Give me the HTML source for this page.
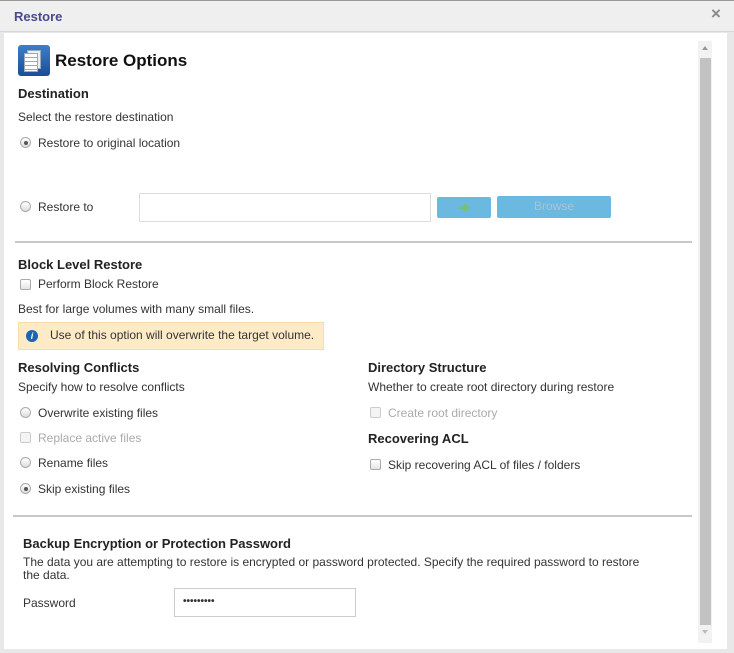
<!DOCTYPE html>
<html><head><style>
*{margin:0;padding:0;box-sizing:border-box}
body{width:734px;height:653px;background:#e8e8e8;font-family:"Liberation Sans",Arial,sans-serif;font-size:12px;color:#333;position:relative;overflow:hidden}
.a{position:absolute;white-space:nowrap}
.h{font-weight:bold;font-size:13px;color:#222}
.rad{position:absolute;width:11px;height:11px;border:1px solid #aaa;border-radius:50%;background:linear-gradient(#fff,#ddd)}
.rad.on::after{content:"";position:absolute;left:2.5px;top:2.5px;width:4px;height:4px;border-radius:50%;background:#555}
.cb{position:absolute;width:11px;height:11px;border:1px solid #aaa;border-radius:2px;background:linear-gradient(#fff,#e4e4e4)}
.cb.dis{border-color:#ccc;background:#f4f4f4}
.hr{position:absolute;height:2px;background:#c8c8c8}
</style></head><body>
<div class="a" style="left:0;top:0;width:734px;height:1px;background:#999"></div>
<div class="a" style="left:0;top:1px;width:734px;height:31px;background:#efefef;border-bottom:1px solid #d8d8d8"></div>
<div class="a" style="left:14px;top:9px;font-size:13px;font-weight:bold;color:#4a4a8a">Restore</div>
<div class="a" style="left:711px;top:4px;font-size:17px;color:#888;font-weight:bold">×</div>
<div class="a" style="left:4px;top:33px;width:723px;height:616px;background:#fff"></div>
<!-- scrollbar -->
<div class="a" style="left:698px;top:41px;width:14px;height:602px;background:#f2f2f2"></div>
<div class="a" style="left:700px;top:58px;width:11px;height:567px;background:#c2c2c2"></div>
<div class="a" style="left:702px;top:46px;width:0;height:0;border-left:3px solid transparent;border-right:3px solid transparent;border-bottom:4px solid #999"></div>
<div class="a" style="left:702px;top:630px;width:0;height:0;border-left:3px solid transparent;border-right:3px solid transparent;border-top:4px solid #bbb"></div>
<!-- icon -->
<div class="a" style="left:18px;top:45px;width:32px;height:31px;border-radius:3px;background:linear-gradient(#3f7fc8,#1a4d96)"></div>
<div class="a" style="left:27px;top:50px;width:14px;height:19px;background:#e6eef8;border:1px solid #9ab"></div>
<div class="a" style="left:24px;top:53px;width:14px;height:19px;background:#fff;border:1px solid #9ab;background-image:repeating-linear-gradient(#fff 0 3px,#9ab 3px 4px)"></div>
<div class="a" style="left:55px;top:51px;font-size:17px;font-weight:bold;color:#111">Restore Options</div>
<div class="a h" style="left:18px;top:86px">Destination</div>
<div class="a" style="left:18px;top:110px">Select the restore destination</div>
<div class="rad on" style="left:20px;top:137px"></div>
<div class="a" style="left:38px;top:136px">Restore to original location</div>
<div class="rad" style="left:20px;top:201px"></div>
<div class="a" style="left:38px;top:200px">Restore to</div>
<div class="a" style="left:139px;top:193px;width:292px;height:29px;border:1px solid #ddd"></div>
<div class="a" style="left:437px;top:197px;width:54px;height:21px;background:#6bb8e0;border-radius:2px;color:#7bc06a;text-align:center;font-size:14px;line-height:20px;font-weight:bold">➔</div>
<div class="a" style="left:497px;top:196px;width:114px;height:22px;background:#6bb8e0;border-radius:2px;color:#a9c4d2;text-align:center;line-height:20px">Browse</div>
<div class="hr" style="left:15px;top:241px;width:677px"></div>
<div class="a h" style="left:18px;top:257px">Block Level Restore</div>
<div class="cb" style="left:20px;top:279px"></div>
<div class="a" style="left:38px;top:277px">Perform Block Restore</div>
<div class="a" style="left:18px;top:302px">Best for large volumes with many small files.</div>
<div class="a" style="left:18px;top:322px;width:306px;height:28px;background:#fdebc8;border:1px solid #f7dba8"></div>
<div class="a" style="left:26px;top:330px;width:12px;height:12px;border-radius:50%;background:#1d64b0;color:#fff;font-size:9px;font-weight:bold;font-style:italic;text-align:center;line-height:12px">i</div>
<div class="a" style="left:50px;top:328px">Use of this option will overwrite the target volume.</div>
<div class="a h" style="left:18px;top:360px">Resolving Conflicts</div>
<div class="a" style="left:18px;top:380px">Specify how to resolve conflicts</div>
<div class="rad" style="left:20px;top:407px"></div>
<div class="a" style="left:38px;top:406px">Overwrite existing files</div>
<div class="cb dis" style="left:20px;top:432px"></div>
<div class="a" style="left:38px;top:431px;color:#aaa">Replace active files</div>
<div class="rad" style="left:20px;top:457px"></div>
<div class="a" style="left:38px;top:456px">Rename files</div>
<div class="rad on" style="left:20px;top:483px"></div>
<div class="a" style="left:38px;top:482px">Skip existing files</div>
<div class="a h" style="left:368px;top:360px">Directory Structure</div>
<div class="a" style="left:368px;top:380px">Whether to create root directory during restore</div>
<div class="cb dis" style="left:370px;top:407px"></div>
<div class="a" style="left:388px;top:406px;color:#aaa">Create root directory</div>
<div class="a h" style="left:368px;top:431px">Recovering ACL</div>
<div class="cb" style="left:370px;top:459px"></div>
<div class="a" style="left:388px;top:458px">Skip recovering ACL of files / folders</div>
<div class="hr" style="left:13px;top:515px;width:679px"></div>
<div class="a h" style="left:23px;top:536px">Backup Encryption or Protection Password</div>
<div class="a" style="left:23px;top:556px;line-height:13px">The data you are attempting to restore is encrypted or password protected. Specify the required password to restore<br>the data.</div>
<div class="a" style="left:23px;top:596px">Password</div>
<div class="a" style="left:174px;top:588px;width:182px;height:29px;border:1px solid #ccc;padding-left:8px;line-height:26px;font-size:10px;font-weight:bold">•••••••••</div>
</body></html>
